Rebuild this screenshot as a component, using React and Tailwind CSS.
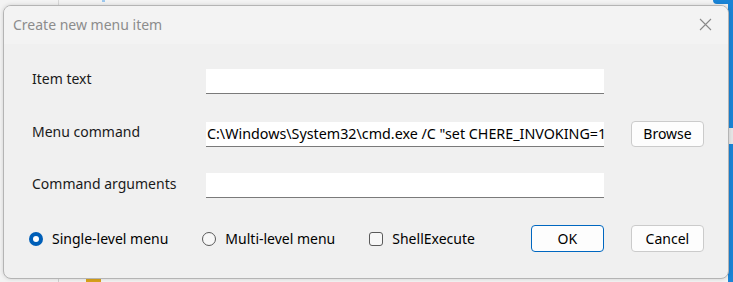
import React from "react";

export default function App() {
  const font = { fontFamily: '"Noto Sans", "Segoe UI", sans-serif' };
  return (
    <div className="relative w-[733px] h-[282px] overflow-hidden bg-[#f3f3f3]" style={font}>
      {/* background desktop fragments */}
      <div className="absolute left-[58px] top-0 h-[5px] w-px bg-[#d8d8d8]" />
      <div className="absolute left-[102px] top-0 h-[2px] w-[3px] bg-[#9cc8ee]" />
      <div className="absolute right-0 top-0 h-full w-[5px] bg-[#1a84d6]" />
      <div className="absolute right-0 top-[128px] h-[16px] w-[5px] bg-[#e6e6e6]" />
      <div className="absolute right-0 top-0 h-[4px] w-[20px] rounded-bl-[8px] bg-[#1a84d6]" />
      <div className="absolute left-[86px] bottom-0 h-[3px] w-[15px] bg-[#d9a21b]" />
      <div className="absolute left-[58px] bottom-0 h-[3px] w-px bg-[#d0d0d0]" />

      <div className="relative ml-[3px] pt-[5px]">
        <div className="w-[726px] h-[274px] rounded-[8px] border border-[#b4b4b4] bg-[#f0f0f0] overflow-hidden flex flex-col shadow-[0_0_4px_rgba(0,0,0,0.15)]">
          {/* title bar */}
          <div className="h-[38px] bg-[#f3f3f3] flex items-center justify-between pl-[9px] pr-[16px]">
            <span className="text-[14px] text-[#8c8c8c] leading-none">Create new menu item</span>
            <svg width="13" height="13" viewBox="0 0 13 13" className="-mt-[1px]">
              <path d="M1 1 L12 12 M12 1 L1 12" stroke="#8a8a8a" strokeWidth="1.1" />
            </svg>
          </div>
          {/* body */}
          <div className="flex-1 flex flex-col pl-[28px] text-[14px] text-[#1a1a1a]">
            <div className="flex items-center h-[25px] mt-[25px]">
              <span className="w-[174px] mb-[6px]">Item text</span>
              <div className="w-[398px] h-[25px] bg-white border-b border-[#7a7a7a]" />
            </div>
            <div className="flex items-center h-[26px] mt-[27px]">
              <span className="w-[174px] mb-[6px]">Menu command</span>
              <div className="w-[398px] h-[25px] bg-white border-b border-[#7a7a7a] overflow-hidden whitespace-nowrap pl-[1px] text-[14.3px] leading-[24px] text-black">
                C:\Windows\System32\cmd.exe /C "set CHERE_INVOKING=1
              </div>
              <button className="ml-[27px] w-[73px] h-[26px] bg-[#fdfdfd] border border-[#cbcbcb] rounded-[4px] text-[14px] text-black leading-none">
                Browse
              </button>
            </div>
            <div className="flex items-center h-[25px] mt-[26px]">
              <span className="w-[174px] mb-[4px]">Command arguments</span>
              <div className="w-[398px] h-[25px] bg-white border-b border-[#7a7a7a]" />
            </div>
            <div className="flex items-center h-[27px] mt-[27px] text-black">
              <div className="w-[14px] h-[14px] rounded-full bg-[#005fb8] flex items-center justify-center -ml-[3px]">
                <div className="w-[6px] h-[6px] rounded-full bg-white" />
              </div>
              <span className="ml-[9px]">Single-level menu</span>
              <div className="ml-[34px] w-[14px] h-[14px] rounded-full border border-[#5a5a5a] bg-[#f7f7f7]" />
              <span className="ml-[9px]">Multi-level menu</span>
              <div className="ml-[34px] w-[14px] h-[14px] rounded-[3px] border border-[#5a5a5a] bg-[#f7f7f7]" />
              <span className="ml-[9px]">ShellExecute</span>
              <button className="ml-[56px] w-[73px] h-[27px] bg-[#fdfdfd] border border-[#0067c0] rounded-[4px] text-[14px] text-black leading-none">
                OK
              </button>
              <button className="ml-[27px] w-[73px] h-[27px] bg-[#fdfdfd] border border-[#cbcbcb] rounded-[4px] text-[14px] text-black leading-none">
                Cancel
              </button>
            </div>
          </div>
        </div>
      </div>
    </div>
  );
}
